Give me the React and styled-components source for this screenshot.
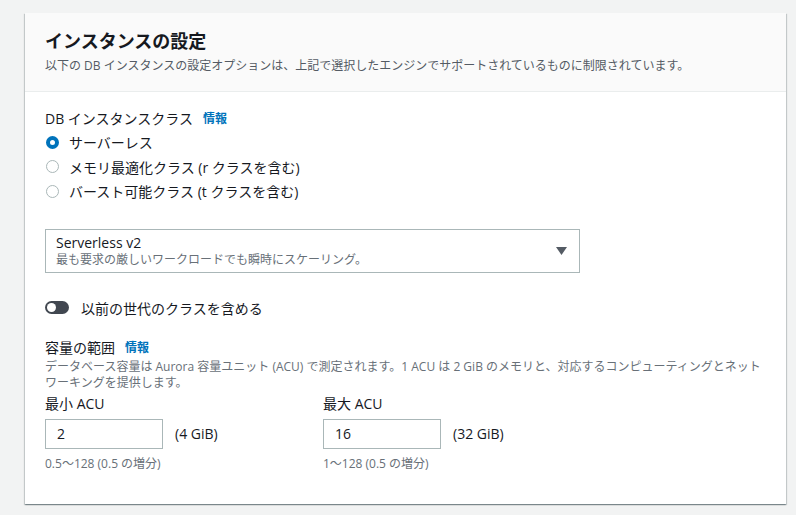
import React from "react";
import styled, { createGlobalStyle } from "styled-components";

const GlobalStyle = createGlobalStyle`
  html, body {
    margin: 0;
    padding: 0;
    background: #f2f3f3;
  }
  body {
    font-family: "Open Sans", "Noto Sans CJK JP", sans-serif;
    color: #16191f;
  }
  * {
    box-sizing: border-box;
  }
`;

const Page = styled.div`
  padding: 13px 10px 12px 25px;
`;

const Card = styled.section`
  background: #fff;
  box-shadow: 0 1px 1px 0 rgba(0, 28, 36, 0.3), 1px 1px 1px 0 rgba(0, 28, 36, 0.15),
    -1px 1px 1px 0 rgba(0, 28, 36, 0.15);
`;

const CardHeader = styled.header`
  background: #fafafa;
  border-bottom: 1px solid #eaeded;
  padding: 17px 20px 17px 20px;
`;

const Title = styled.h2`
  margin: 0;
  font-size: 18px;
  line-height: 22px;
  font-weight: 700;
`;

const Subtitle = styled.p`
  margin: 6px 0 0;
  font-size: 12px;
  line-height: 16px;
  color: #545b64;
`;

const CardBody = styled.div`
  padding: 17px 20px 32px;
`;

const Label = styled.div`
  font-size: 14px;
  line-height: 20px;
  margin-top: ${(p) => p.$top || 0}px;
  display: flex;
  align-items: center;
  gap: 10px;
`;

const Info = styled.a`
  color: #0073bb;
  font-size: 12px;
  font-weight: 700;
  text-decoration: none;
`;

const RadioList = styled.div`
  margin-top: 1px;
  display: flex;
  flex-direction: column;
`;

const RadioRow = styled.label`
  display: flex;
  align-items: center;
  gap: 10px;
  height: 24.5px;
  font-size: 14px;
`;

const RadioDot = styled.span`
  width: 13px;
  height: 13px;
  margin-left: 1px;
  border-radius: 50%;
  flex-shrink: 0;
  border: ${(p) => (p.$checked ? "4px solid #0073bb" : "1.5px solid #aab7b8")};
  background: #fff;
`;

const Select = styled.div`
  margin-top: 25px;
  width: 535px;
  border: 1px solid #aab7b8;
  padding: 4px 10px;
  display: flex;
  align-items: center;
  justify-content: space-between;
`;

const SelectTitle = styled.div`
  font-size: 14px;
  line-height: 18px;
`;

const SelectDesc = styled.div`
  font-size: 12px;
  line-height: 16px;
  color: #687078;
`;

const Caret = styled.svg`
  margin-right: 2px;
  margin-top: 1px;
`;

const ToggleRow = styled.label`
  margin-top: 23px;
  display: flex;
  align-items: center;
  gap: 12px;
  height: 24px;
  font-size: 14px;
`;

const Toggle = styled.span`
  position: relative;
  width: 24px;
  height: 13px;
  border-radius: 7px;
  background: #414750;
  &::after {
    content: "";
    position: absolute;
    left: 2px;
    top: 2px;
    width: 9px;
    height: 9px;
    border-radius: 50%;
    background: #fff;
  }
`;

const Description = styled.p`
  margin: 1px 0 0;
  font-size: 12px;
  line-height: 16px;
  color: #687078;
`;

const Columns = styled.div`
  margin-top: 3px;
  display: grid;
  grid-template-columns: 278px 278px;
`;

const Field = styled.div`
  display: flex;
  flex-direction: column;
`;

const InputRow = styled.div`
  margin-top: 5px;
  display: flex;
  align-items: center;
  gap: 12px;
`;

const Input = styled.div`
  width: 118px;
  height: 30px;
  border: 1px solid #aab7b8;
  padding: 0 11px;
  display: flex;
  align-items: center;
  font-size: 14px;
`;

const Unit = styled.span`
  font-size: 14px;
`;

const Constraint = styled.div`
  margin-top: 7px;
  font-size: 12px;
  line-height: 16px;
  color: #687078;
`;

const classes = [
  { label: "サーバーレス", checked: true },
  { label: "メモリ最適化クラス (r クラスを含む)" },
  { label: "バースト可能クラス (t クラスを含む)" },
];

const acu = [
  { label: "最小 ACU", value: "2", unit: "(4 GiB)", hint: "0.5〜128 (0.5 の増分)" },
  { label: "最大 ACU", value: "16", unit: "(32 GiB)", hint: "1〜128 (0.5 の増分)" },
];

export default function App() {
  return (
    <>
      <GlobalStyle />
      <Page>
        <Card>
          <CardHeader>
            <Title>インスタンスの設定</Title>
            <Subtitle>
              以下の DB インスタンスの設定オプションは、上記で選択したエンジンでサポートされているものに制限されています。
            </Subtitle>
          </CardHeader>
          <CardBody>
            <Label>
              DB インスタンスクラス <Info>情報</Info>
            </Label>
            <RadioList>
              {classes.map((c) => (
                <RadioRow key={c.label}>
                  <RadioDot $checked={c.checked} />
                  {c.label}
                </RadioRow>
              ))}
            </RadioList>
            <Select>
              <div>
                <SelectTitle>Serverless v2</SelectTitle>
                <SelectDesc>最も要求の厳しいワークロードでも瞬時にスケーリング。</SelectDesc>
              </div>
              <Caret width="11" height="8" viewBox="0 0 11 8">
                <path d="M0 0h11L5.5 8z" fill="#545b64" />
              </Caret>
            </Select>
            <ToggleRow>
              <Toggle />
              以前の世代のクラスを含める
            </ToggleRow>
            <Label $top={18}>
              容量の範囲 <Info>情報</Info>
            </Label>
            <Description>
              データベース容量は Aurora 容量ユニット (ACU) で測定されます。1 ACU は 2 GiB のメモリと、対応するコンピューティングとネット
              <br />
              ワーキングを提供します。
            </Description>
            <Columns>
              {acu.map((f) => (
                <Field key={f.label}>
                  <Label>{f.label}</Label>
                  <InputRow>
                    <Input>{f.value}</Input>
                    <Unit>{f.unit}</Unit>
                  </InputRow>
                  <Constraint>{f.hint}</Constraint>
                </Field>
              ))}
            </Columns>
          </CardBody>
        </Card>
      </Page>
    </>
  );
}
